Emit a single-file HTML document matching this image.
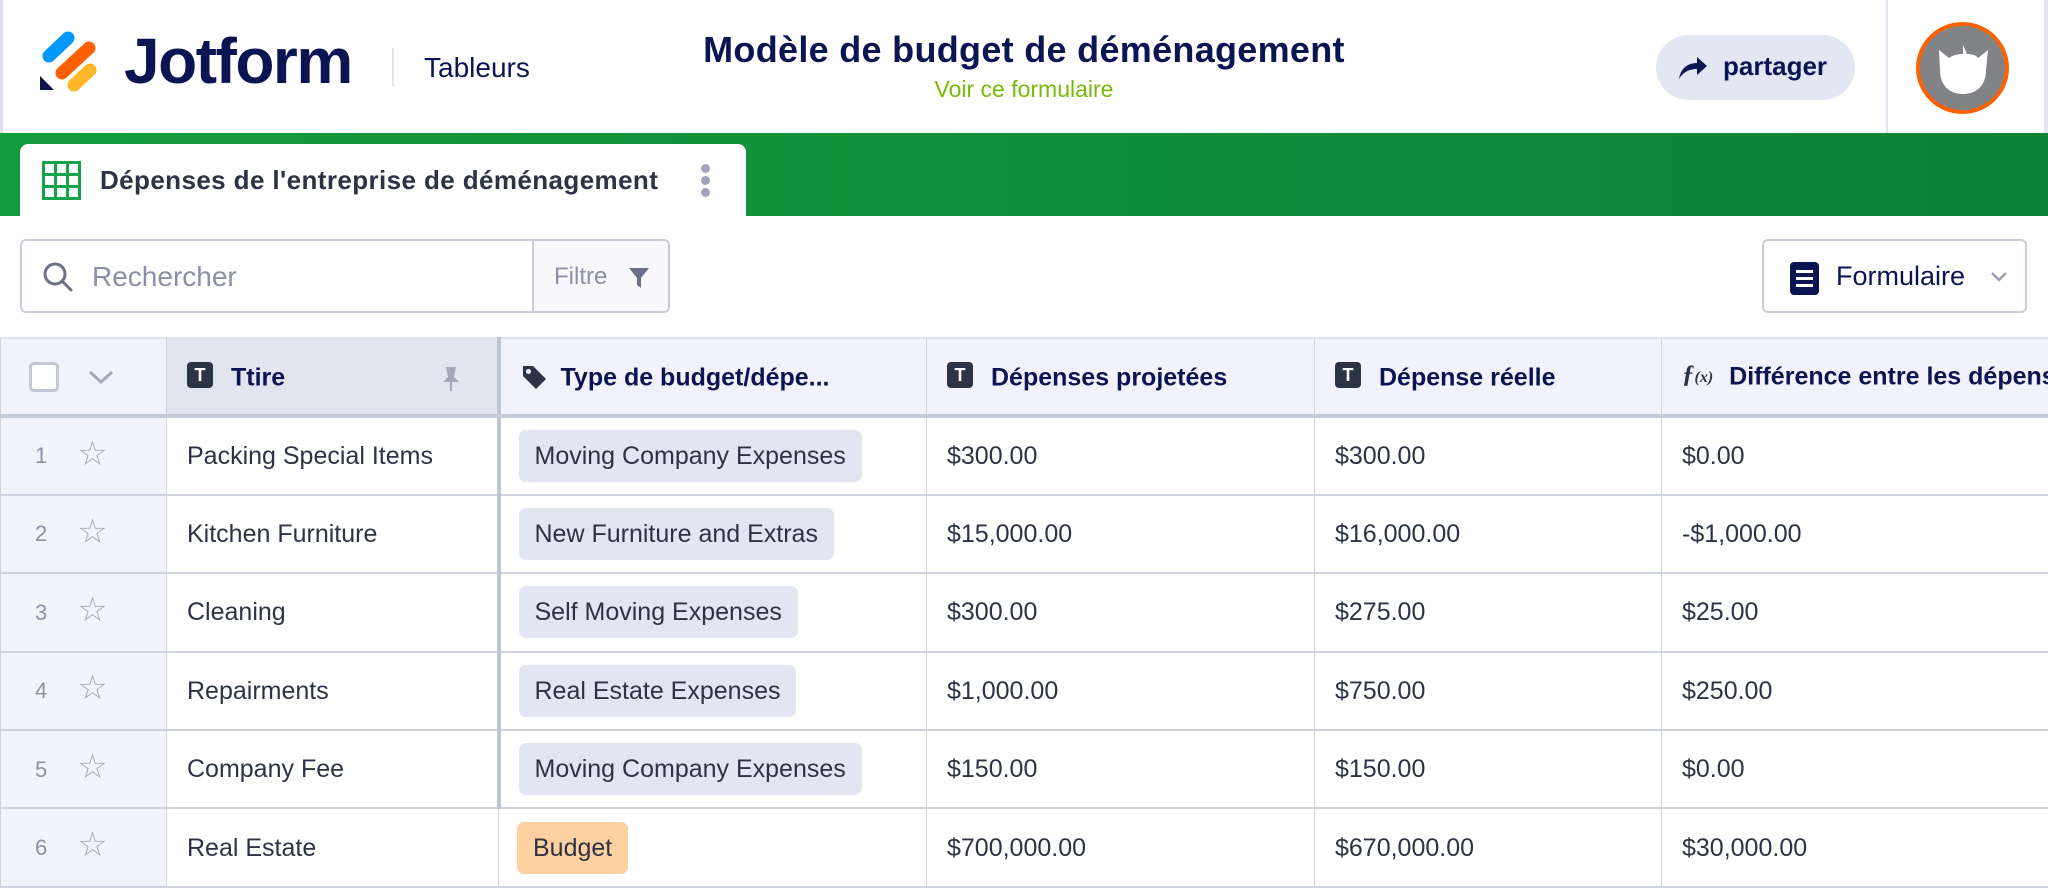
<!DOCTYPE html>
<html><head><meta charset="utf-8"><style>
*{box-sizing:border-box;margin:0;padding:0}
body{width:2048px;height:888px;overflow:hidden;background:#fff;font-family:"Liberation Sans",sans-serif;color:#2c3345;position:relative}
.abs{position:absolute}
.hdr{left:0;top:0;width:2048px;height:133px;background:#fff;border-left:3px solid #dfe1ec}
.green{left:0;top:133px;width:2048px;height:83px;background:linear-gradient(90deg,#139b3f,#0a8234)}
.tab{left:20px;top:144px;width:726px;height:72px;background:#fff;border-radius:8px 8px 0 0}
.t{white-space:nowrap}
.search{left:20px;top:239px;width:650px;height:74px;border:2px solid #c8ccdb;border-radius:6px;overflow:hidden}
.filt{position:absolute;left:510px;top:0;width:140px;height:100%;border-left:2px solid #c8ccdb;background:#f8f8fc}
.form{left:1762px;top:239px;width:265px;height:74px;border:2px solid #c8ccdb;border-radius:6px}
table{position:absolute;left:0;top:337px;border-collapse:collapse;table-layout:fixed;width:2100px}
td,th{height:78.4px;border:1px solid #cfd3e0;border-top:2px solid #cfd3e0;border-bottom:2px solid #cfd3e0;font-size:25px;font-weight:normal;text-align:left;padding-left:20px;white-space:nowrap;overflow:hidden;vertical-align:middle;line-height:30px}
th{background:#f1f2fb;font-weight:bold;color:#0a1551;font-size:25px;border-bottom:4px solid #c5cad8;border-top:2px solid #dfe2ec}
td.n{background:#f3f4fb;color:#8d91a6;font-size:22px;padding-left:34px}
.tag{display:inline-block;background:#e3e6f2;border-radius:7px;padding:0 16px;height:52px;line-height:52px;vertical-align:middle}
.ti{display:inline-block;width:26px;height:26px;background:#2c3345;color:#fff;border-radius:4px;font-size:18px;line-height:26px;text-align:center;vertical-align:middle;margin-right:18px;font-weight:bold;position:relative;top:-2px}
.st{display:inline-block;margin-left:30px;font-size:34px;color:#a4a8ba;vertical-align:middle;line-height:30px;position:relative;top:-3px}
.nm{vertical-align:middle}
</style></head><body>
<div class="abs hdr"></div>
<svg class="abs" style="left:36px;top:30px" width="64" height="66" viewBox="0 0 64 66">
<line x1="13" y1="26" x2="32" y2="8" stroke="#0099ff" stroke-width="13" stroke-linecap="round"/>
<line x1="26" y1="43" x2="53" y2="18" stroke="#ff6100" stroke-width="13" stroke-linecap="round"/>
<line x1="38" y1="55" x2="54" y2="40" stroke="#ffb629" stroke-width="13" stroke-linecap="round"/>
<path d="M4 46 L4 60 L18 60 Z" fill="#0a1551"/>
</svg>
<div class="abs t" style="left:124px;top:24px;font-size:64px;font-weight:bold;color:#0a1551;letter-spacing:-1.5px">Jotform</div>
<div class="abs" style="left:392px;top:48px;width:2px;height:38px;background:#e3e5ee"></div>
<div class="abs t" style="left:424px;top:52px;font-size:28px;color:#0a1551">Tableurs</div>
<div class="abs t" style="left:0;width:2048px;text-align:center;top:29px;font-size:36px;font-weight:bold;color:#0a1551;letter-spacing:0.3px">Modèle de budget de déménagement</div>
<div class="abs t" style="left:0;width:2048px;text-align:center;top:76px;font-size:23px;color:#78bb07">Voir ce formulaire</div>
<div class="abs" style="left:1656px;top:35px;width:199px;height:65px;background:#e3e7f4;border-radius:33px"></div>
<svg class="abs" style="left:1677px;top:55px" width="32" height="26" viewBox="0 0 32 26"><path d="M2 24 C4 12 12 8 20 8 L20 2 L30 11 L20 20 L20 14 C12 14 6 17 2 24Z" fill="#0a1551"/></svg>
<div class="abs t" style="left:1723px;top:51px;font-size:26px;font-weight:bold;color:#0a1551">partager</div>
<div class="abs" style="left:1886px;top:0;width:2px;height:133px;background:#e3e5ee"></div>
<div class="abs" style="left:1916px;top:22px;width:93px;height:92px;border-radius:50%;background:#828387;border:4px solid #ff6100"></div>
<svg class="abs" style="left:1932px;top:38px" width="62" height="62" viewBox="0 0 62 62"><path d="M7 12 L17 20 C21 17 26 16 31 16 L31 7 L35 16 C40 16 44 17 46 20 L56 12 L54 32 C54 48 44 56 31 56 C18 56 8 48 8 32 Z" fill="#fff"/></svg>
<div class="abs" style="left:2044px;top:0;width:4px;height:133px;background:#e3e5ee"></div>
<div class="abs green"></div>
<div class="abs tab"></div>
<svg class="abs" style="left:42px;top:161px" width="39" height="39" viewBox="0 0 39 39"><rect x="1.5" y="1.5" width="36" height="36" fill="#fff" stroke="#16a34a" stroke-width="3"/><path d="M13.5 1.5V37.5M25.5 1.5V37.5M1.5 13.5H37.5M1.5 25.5H37.5" stroke="#16a34a" stroke-width="3"/></svg>
<div class="abs t" style="left:100px;top:165px;font-size:26px;font-weight:bold;color:#2c3345;letter-spacing:0.4px">Dépenses de l'entreprise de déménagement</div>
<div class="abs" style="left:701px;top:164px;width:9px;height:9px;border-radius:50%;background:#a0a4b8;box-shadow:0 12px 0 #a0a4b8,0 24px 0 #a0a4b8"></div>
<div class="abs search">
<svg class="abs" style="left:20px;top:20px" width="32" height="32" viewBox="0 0 32 32"><circle cx="13" cy="13" r="10" fill="none" stroke="#6c7088" stroke-width="3"/><path d="M20 20 L29 29" stroke="#6c7088" stroke-width="3" stroke-linecap="round"/></svg>
<div class="abs t" style="left:70px;top:20px;font-size:28px;color:#8d8fa8">Rechercher</div>
<div class="filt"><div class="abs t" style="left:20px;top:22px;font-size:24px;color:#8d8fa8">Filtre</div>
<svg class="abs" style="left:94px;top:26px" width="22" height="22" viewBox="0 0 22 22"><path d="M1 1 H21 L13 11 V21 L9 18 V11 Z" fill="#6c7088"/></svg></div>
</div>
<div class="abs form">
<div class="abs" style="left:26px;top:21px;width:29px;height:33px;background:#0a1551;border-radius:4px"></div>
<div class="abs" style="left:32px;top:29px;width:17px;height:3px;background:#fff;box-shadow:0 7px 0 #fff,0 14px 0 #fff"></div>
<div class="abs t" style="left:72px;top:20px;font-size:27px;color:#0a1551">Formulaire</div>
<svg class="abs" style="left:226px;top:30px" width="18" height="12" viewBox="0 0 18 12"><path d="M2 2 L9 9 L16 2" fill="none" stroke="#9ea2b5" stroke-width="2.5"/></svg>
</div>
<table>
<colgroup><col style="width:166px"><col style="width:332px"><col style="width:428px"><col style="width:388px"><col style="width:347px"><col style="width:439px"></colgroup>
<tr><th style="padding-left:28px"><span style="display:inline-block;width:30px;height:30px;border:3px solid #c3c7d6;border-radius:5px;background:#fff;vertical-align:middle"></span><svg style="margin-left:28px;vertical-align:middle" width="28" height="16" viewBox="0 0 28 16"><path d="M3 3 L14 13 L25 3" fill="none" stroke="#a4a8ba" stroke-width="3"/></svg></th>
<th style="background:#e2e5ef;position:relative;border-right:4px solid #bfc4d3"><span class="ti">T</span><span class="nm">Ttire</span><svg style="position:absolute;right:36px;top:26px" width="20" height="26" viewBox="0 0 20 26"><path d="M5 2 H15 L13 12 L18 17 H2 L7 12 Z M9 17 H11 V26 H9Z" fill="#a4a8ba"/></svg></th>
<th><svg style="vertical-align:middle;margin-right:14px" width="26" height="26" viewBox="0 0 26 26"><path d="M2 2 H12 L25 15 L15 25 L2 12 Z" fill="#2c3345"/><circle cx="7.5" cy="7.5" r="2.5" fill="#f1f2fb"/></svg><span class="nm">Type de budget/dépe...</span></th>
<th><span class="ti">T</span><span class="nm">Dépenses projetées</span></th>
<th><span class="ti">T</span><span class="nm">Dépense réelle</span></th>
<th><span class="nm" style="font-style:italic;font-family:'Liberation Serif',serif;margin-right:16px;color:#2c3345">ƒ<small style="font-size:16px">(x)</small></span><span class="nm">Différence entre les dépenses</span></th></tr>
<tr><td class="n"><span class="nm">1</span><span class="st">☆</span></td><td>Packing Special Items</td><td style="padding-left:18px;border-left:4px solid #bfc4d3"><span class="tag">Moving Company Expenses</span></td><td>$300.00</td><td>$300.00</td><td>$0.00</td></tr>
<tr><td class="n"><span class="nm">2</span><span class="st">☆</span></td><td>Kitchen Furniture</td><td style="padding-left:18px;border-left:4px solid #bfc4d3"><span class="tag">New Furniture and Extras</span></td><td>$15,000.00</td><td>$16,000.00</td><td>-$1,000.00</td></tr>
<tr><td class="n"><span class="nm">3</span><span class="st">☆</span></td><td>Cleaning</td><td style="padding-left:18px;border-left:4px solid #bfc4d3"><span class="tag">Self Moving Expenses</span></td><td>$300.00</td><td>$275.00</td><td>$25.00</td></tr>
<tr><td class="n"><span class="nm">4</span><span class="st">☆</span></td><td>Repairments</td><td style="padding-left:18px;border-left:4px solid #bfc4d3"><span class="tag">Real Estate Expenses</span></td><td>$1,000.00</td><td>$750.00</td><td>$250.00</td></tr>
<tr><td class="n"><span class="nm">5</span><span class="st">☆</span></td><td>Company Fee</td><td style="padding-left:18px;border-left:4px solid #bfc4d3"><span class="tag">Moving Company Expenses</span></td><td>$150.00</td><td>$150.00</td><td>$0.00</td></tr>
<tr><td class="n"><span class="nm">6</span><span class="st">☆</span></td><td>Real Estate</td><td style="padding-left:18px"><span class="tag" style="background:#ffd0a0">Budget</span></td><td>$700,000.00</td><td>$670,000.00</td><td>$30,000.00</td></tr>
</table>
</body></html>
